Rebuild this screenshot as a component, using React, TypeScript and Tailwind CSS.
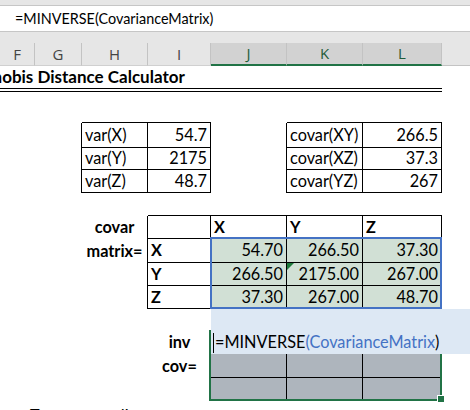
import clsx from "clsx";
import type { ReactNode } from "react";

// column widths taken from the header boundaries (F..L)
const W = {
  F: "w-[35px]",
  G: "w-[47px]",
  H: "w-[66px]",
  I: "w-[63px]",
  J: "w-[76px]",
  K: "w-[76px]",
  L: "w-[79px]",
};

type CellProps = {
  w: string;
  br?: boolean;
  bb?: boolean;
  align?: "left" | "right" | "center";
  bold?: boolean;
  bg?: string;
  children?: ReactNode;
};

function Cell({ w, br, bb, align = "left", bold, bg, children }: CellProps) {
  return (
    <div
      className={clsx(
        "flex h-full shrink-0 items-center whitespace-nowrap",
        w,
        br && "border-r border-black",
        bb && "border-b border-black",
        align === "right" && "justify-end pr-[3px]",
        align === "left" && "pl-[3px]",
        align === "center" && "justify-center",
        bold && "font-bold",
        bg
      )}
    >
      {children}
    </div>
  );
}

function Header({ w, label, selected }: { w: string; label: string; selected?: boolean }) {
  return (
    <div
      className={clsx(
        "flex h-full shrink-0 items-center justify-center border-r border-[#c3c3c3]",
        w,
        selected
          ? "border-b-2 border-b-[#217346] bg-[#d2d2d2] text-[#1e5c39]"
          : "border-b border-b-[#d0d0d0] text-[#444]"
      )}
    >
      {label}
    </div>
  );
}

const matrixFill = "bg-[#d1e0d5]";
const selFill = "bg-[#aeb5bd]";

export default function App() {
  return (
    <div className="relative h-[410px] w-[470px] overflow-hidden bg-white font-['Lato',sans-serif] text-[16.3px] text-black">
      {/* formula bar */}
      <div className="h-[43px] bg-[#e6e6e6] pt-[5px]">
        <div className="flex h-[27px] items-center border-y border-[#c6c6c6] bg-white pl-[15px] text-[14.4px]">
          =MINVERSE(CovarianceMatrix)
        </div>
      </div>

      {/* column headers */}
      <div className="flex h-[23px] bg-[#e6e6e6] font-['Open_Sans',sans-serif] text-[15px]">
        <Header w={W.F} label="F" />
        <Header w={W.G} label="G" />
        <Header w={W.H} label="H" />
        <Header w={W.I} label="I" />
        <Header w={W.J} label="J" selected />
        <Header w={W.K} label="K" selected />
        <Header w={W.L} label="L" selected />
        <div className="h-full flex-1 border-b border-[#c3c3c3]" />
      </div>

      {/* row 1: title */}
      <div className="flex h-[26px]">
        <div className="flex h-full w-[442px] items-center overflow-hidden border-b-4 border-double border-black text-[17px] font-bold">
          <span className="-ml-[63px] whitespace-nowrap">Mahalanobis Distance Calculator</span>
        </div>
      </div>

      {/* row 2 */}
      <div className="flex h-[31px]">
        <Cell w={W.F} />
        <Cell w={W.G} />
        <Cell w={W.H} bb />
        <Cell w={W.I} bb />
        <Cell w={W.J} />
        <Cell w={W.K} bb />
        <Cell w={W.L} bb />
      </div>

      {/* variance / covariance tables */}
      {[
        ["h-[25px]", "var(X)", "54.7", "covar(XY)", "266.5"],
        ["h-[22px]", "var(Y)", "2175", "covar(XZ)", "37.3"],
        ["h-[23px]", "var(Z)", "48.7", "covar(YZ)", "267"],
      ].map(([h, a, av, b, bv]) => (
        <div key={a} className={clsx("flex", h)}>
          <Cell w={W.F} />
          <Cell w={W.G} br />
          <Cell w={W.H} br bb>{a}</Cell>
          <Cell w={W.I} br bb align="right">{av}</Cell>
          <Cell w={W.J} br />
          <Cell w={W.K} br bb>{b}</Cell>
          <Cell w={W.L} br bb align="right">{bv}</Cell>
        </div>
      ))}

      {/* row 6 */}
      <div className="flex h-[23px]">
        <Cell w={W.F} />
        <Cell w={W.G} />
        <Cell w={W.H} />
        <Cell w={W.I} bb />
        <Cell w={W.J} bb />
        <Cell w={W.K} bb />
        <Cell w={W.L} bb />
      </div>

      {/* matrix header */}
      <div className="flex h-[23px]">
        <Cell w={W.F} />
        <Cell w={W.G} />
        <Cell w={W.H} br bold align="center">covar</Cell>
        <Cell w={W.I} br bb />
        <Cell w={W.J} br bb bold>X</Cell>
        <Cell w={W.K} br bb bold>Y</Cell>
        <Cell w={W.L} br bb bold>Z</Cell>
      </div>

      {[
        ["h-[24px]", "matrix=", "X", "54.70", "266.50", "37.30"],
        ["h-[23px]", "", "Y", "266.50", "2175.00", "267.00"],
        ["h-[23px]", "", "Z", "37.30", "267.00", "48.70"],
      ].map(([h, label, r, x, y, z]) => (
        <div key={r} className={clsx("flex", h)}>
          <Cell w={W.F} />
          <Cell w={W.G} />
          <Cell w={W.H} br bold align="center">{label}</Cell>
          <Cell w={W.I} br bb bold>{r}</Cell>
          <Cell w={W.J} br bb align="right" bg={matrixFill}>{x}</Cell>
          <Cell w={W.K} br bb align="right" bg={matrixFill}>{y}</Cell>
          <Cell w={W.L} br bb align="right" bg={matrixFill}>{z}</Cell>
        </div>
      ))}

      {/* row 11 */}
      <div className="h-[22px]" />

      {/* inverse covariance */}
      <div className="flex h-[23px]">
        <Cell w={W.F} />
        <Cell w={W.G} />
        <Cell w={W.H} />
        <Cell w={W.I} bold align="center">inv</Cell>
      </div>
      <div className="flex h-[24px]">
        <Cell w={W.F} />
        <Cell w={W.G} />
        <Cell w={W.H} />
        <Cell w={W.I} bold align="center">cov=</Cell>
        <Cell w={W.J} br bb bg={selFill} />
        <Cell w={W.K} br bb bg={selFill} />
        <Cell w={W.L} bb bg={selFill} />
      </div>
      <div className="flex h-[23px]">
        <Cell w={W.F} />
        <Cell w={W.G} />
        <Cell w={W.H} />
        <Cell w={W.I} />
        <Cell w={W.J} br bg={selFill} />
        <Cell w={W.K} br bg={selFill} />
        <Cell w={W.L} bg={selFill} />
      </div>
      <div className="flex h-[23px] items-start pl-[30px] pt-[7px] leading-[16px]">To measure distance</div>

      {/* range highlight of CovarianceMatrix */}
      <div className="pointer-events-none absolute left-[210px] top-[237px] h-[72px] w-[232px] border-2 border-[#4472c4]" />
      <svg className="absolute left-[287px] top-[263px]" width="7" height="7" viewBox="0 0 7 7">
        <polygon points="0,0 7,0 0,7" fill="#1e7b3c" />
      </svg>

      {/* active selection */}
      <div className="pointer-events-none absolute left-[209px] top-[330px] h-[71px] w-[233px] border-2 border-[#217346]" />
      <div className="absolute left-[437px] top-[395px] h-[8px] w-[8px] border border-white bg-[#217346]" />

      {/* in-cell edit box */}
      <div className="absolute left-[211px] top-[309px] flex h-[45px] w-[259px] items-end bg-[#dde8f4]">
        <div className="flex h-[23px] items-center whitespace-nowrap pl-[2px]">
          <span className="mr-[1px] h-[20px] w-px bg-black" />
          <span>=MINVERSE</span>
          <span className="text-[#4472c4]">(CovarianceMatrix</span>
          <span>)</span>
        </div>
      </div>
    </div>
  );
}
